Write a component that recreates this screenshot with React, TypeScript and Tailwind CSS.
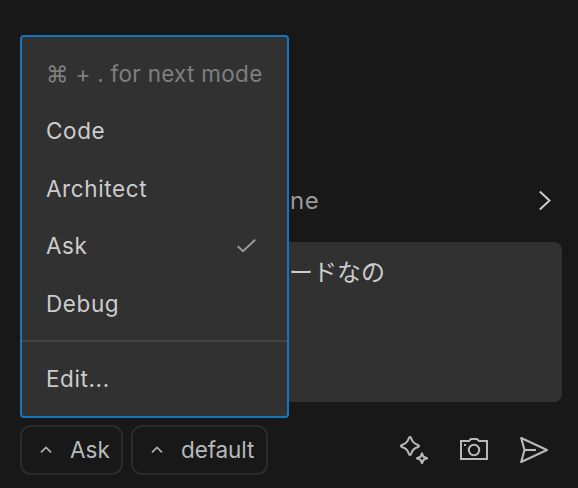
import React from "react";

const modes = ["Code", "Architect", "Ask", "Debug"];
const selected = "Ask";

function Chevron() {
  return (
    <svg className="h-[8px] w-[12px] shrink-0" viewBox="0 0 12 8" fill="none" stroke="#b0b0b0" strokeWidth="1.7">
      <path d="M1 6.4 6 1.5 11 6.4" />
    </svg>
  );
}

function Picker({ label, className }: { label: string; className: string }) {
  return (
    <button className={`flex h-[50px] items-center rounded-[11px] border-2 border-[#2b2b2b] pl-[18px] text-[#b9b9b9] ${className}`}>
      <Chevron />
      <span className="ml-[18px] whitespace-nowrap">{label}</span>
    </button>
  );
}

function ModeMenu() {
  return (
    <div className="absolute left-[20px] top-[35px] flex h-[383px] w-[269px] flex-col rounded-[4px] border-2 border-[#1575be] bg-[#313131] pt-[8px] text-[#cccccc]">
      <div className="flex h-[57.7px] items-center whitespace-nowrap pl-[24px] tracking-[0.28px] text-[#7f7f7f]">⌘ + . for next mode</div>
      {modes.map((mode) => (
        <div key={mode} className="flex h-[57.6px] items-center justify-between pl-[24px] pr-[31px]">
          <span>{mode}</span>
          {mode === selected && (
            <svg className="h-[14px] w-[19px]" viewBox="0 0 19 14" fill="none" stroke="#9c9c9c" strokeWidth="1.9">
              <path d="M.8 7.2 6 12.2 18.2 .8" />
            </svg>
          )}
        </div>
      ))}
      <div className="mt-[7.9px] h-[2px] shrink-0 bg-[#454545]" />
      <div className="flex h-[74px] items-center pl-[24px]">Edit...</div>
    </div>
  );
}

export default function App() {
  return (
    <div className="relative flex h-[488px] w-[578px] flex-col overflow-hidden bg-[#181818] pl-[20px] pr-[16px] font-['Inter','Noto_Sans_CJK_JP',sans-serif] text-[22.5px] leading-[30px] tracking-[0.6px]">
      <div className="mt-[180px] flex h-[42px] items-center justify-between pl-[270px] pr-[10px] text-[#999999]">
        <span className="text-[24px]">ne</span>
        <svg className="h-[22px] w-[14px]" viewBox="0 0 14 22" fill="none" stroke="#d0d0d0" strokeWidth="1.9">
          <path d="M1.8 1.5 11.5 10.5 1.8 19.5" />
        </svg>
      </div>
      <div className="mt-[20px] h-[160px] rounded-[8px] bg-[#313131] pl-[269px] pt-[16px] text-[24px] tracking-normal text-[#cccccc]">ードなの</div>
      <div className="mt-[23px] flex h-[50px] items-center">
        <Picker label="Ask" className="w-[103px] tracking-[0.1px]" />
        <Picker label="default" className="ml-[8px] w-[137px] tracking-[-0.1px]" />
        <div className="ml-auto flex items-center gap-[32px] pr-[14px] text-[#b9b9b9]">
          <svg className="h-[28px] w-[28px]" viewBox="0 0 28 28" fill="none" stroke="currentColor" strokeWidth="2.1" strokeLinejoin="round">
            <path d="M10 1Q10.8 1 11.3 2.5C12.5 6.3 13.7 7.5 17.5 8.7Q19 9.3 19 10Q19 10.7 17.5 11.3C13.7 12.5 12.5 13.7 11.3 17.5Q10.8 19 10 19Q9.2 19 8.7 17.5C7.5 13.7 6.3 12.5 2.5 11.3Q1 10.7 1 10Q1 9.3 2.5 8.7C6.3 7.5 7.5 6.3 8.7 2.5Q9.2 1 10 1Z" />
            <path d="M22 17.4 23.5 20.8 27 22.3 23.5 23.8 22 27.2 20.5 23.8 17 22.3 20.5 20.8Z" />
          </svg>
          <svg className="h-[28px] w-[28px]" viewBox="0 0 28 28" fill="none" stroke="currentColor" strokeWidth="2">
            <path d="M1 5H9L11 3H17L19 5H27V23H1Z" />
            <circle cx="14" cy="14" r="5.2" />
            <path d="M4 9H6" />
          </svg>
          <svg className="h-[28px] w-[28px]" viewBox="0 0 28 28" fill="none" stroke="currentColor" strokeWidth="2.1" strokeLinejoin="round">
            <path d="M1.2 2 27 14 1.2 26 4.5 14Z" />
            <path d="M4.5 14H16" />
          </svg>
        </div>
      </div>
      <ModeMenu />
    </div>
  );
}
